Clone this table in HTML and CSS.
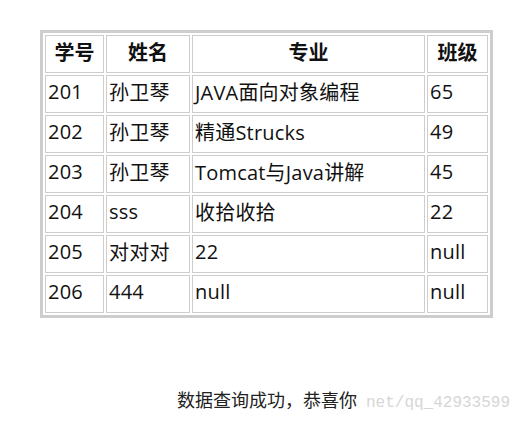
FILE: index.html
```html
<!DOCTYPE html>
<html>
<head>
<meta charset="utf-8">
<link rel="stylesheet" href="styles.css">
</head>
<body>
<div class="page">
  <table class="grid">
    <thead>
      <tr><th class="c1">学号</th><th class="c2">姓名</th><th class="c3">专业</th><th class="c4">班级</th></tr>
    </thead>
    <tbody>
      <tr><td>201</td><td>孙卫琴</td><td>JAVA面向对象编程</td><td>65</td></tr>
      <tr><td>202</td><td>孙卫琴</td><td>精通Strucks</td><td>49</td></tr>
      <tr><td>203</td><td>孙卫琴</td><td>Tomcat与Java讲解</td><td>45</td></tr>
      <tr><td>204</td><td>sss</td><td>收拾收拾</td><td>22</td></tr>
      <tr><td>205</td><td>对对对</td><td>22</td><td>null</td></tr>
      <tr><td>206</td><td>444</td><td>null</td><td>null</td></tr>
    </tbody>
  </table>
  <div class="footer">
    <span class="msg">数据查询成功，恭喜你</span>
    <span class="watermark">net/qq_42933599</span>
  </div>
</div>
</body>
</html>
```

FILE: styles.css
```css
html, body {
  margin: 0;
  padding: 0;
  background: #ffffff;
}
.page {
  width: 520px;
  height: 423px;
  padding-top: 30px;
  box-sizing: border-box;
  font-family: "Open Sans", "Noto Sans CJK SC", sans-serif;
  color: #111;
}
.grid {
  margin-left: 40px;
  border: 3px solid #cdcdcd;
  border-collapse: separate;
  border-spacing: 2px;
  font-size: 20px;
}
.grid th, .grid td {
  border: 1px solid #cdcdcd;
  height: 38px;
  box-sizing: border-box;
  padding: 0 2px 6px 2px;
  text-align: left;
  font-weight: normal;
  white-space: nowrap;
}
.grid td {
  letter-spacing: 0.2px;
}
.grid th {
  text-align: center;
  font-weight: bold;
}
.c1 { width: 59px; }
.c2 { width: 84px; }
.c3 { width: 233px; }
.c4 { width: 61px; }
.footer {
  display: flex;
  align-items: baseline;
  margin-top: 68px;
  padding-left: 177px;
  font-size: 18px;
}
.msg {
  color: #222;
  font-family: "Noto Sans CJK SC", sans-serif;
}
.watermark {
  margin-left: 9px;
  color: #d6d6d6;
  font-family: "Liberation Mono", monospace;
  font-size: 16px;
}
```
